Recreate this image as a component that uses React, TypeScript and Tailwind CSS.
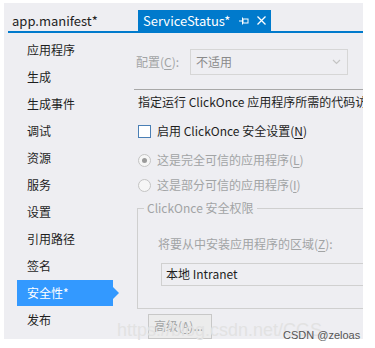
import React from "react";

const navItems = [
  "应用程序",
  "生成",
  "生成事件",
  "调试",
  "资源",
  "服务",
  "设置",
  "引用路径",
  "签名",
  "安全性*",
  "发布",
];

function U({ children }: { children: React.ReactNode }) {
  return <span className="underline underline-offset-2">{children}</span>;
}

function Chevron() {
  return (
    <svg width="9" height="6" viewBox="0 0 9 6" className="shrink-0">
      <path d="M1 1 L4.5 4.5 L8 1" fill="none" stroke="#c4c4c4" strokeWidth="1.2" />
    </svg>
  );
}

export default function App() {
  return (
    <div className="w-[375px] h-[348px] bg-white overflow-hidden relative font-['Noto_Sans_CJK_SC','Noto_Sans',sans-serif] text-[12px] text-[#1e1e1e]">
      <div className="ml-[4px] mt-[3px] w-[359px] h-[336px] bg-[#eeeef2] overflow-hidden flex flex-col">
        {/* tab strip */}
        <div className="ml-[4px] h-[28px] flex items-end">
          <div className="w-[130px] h-[21px] flex items-center pl-[4px] text-[13px] text-[#1e1e1e]">
            app.manifest*
          </div>
          <div className="w-[133px] h-[21px] bg-[#007acc] flex items-center pl-[5px] text-white text-[13px]">
            <span>ServiceStatus*</span>
            <svg width="10" height="8" viewBox="0 0 10 8" className="ml-[9px]">
              <path d="M0 4 H3.5 M3.5 0.5 V7.5" stroke="white" strokeWidth="1" fill="none" />
              <rect x="4" y="2" width="5" height="4" fill="none" stroke="white" strokeWidth="1" />
            </svg>
            <svg width="9" height="9" viewBox="0 0 9 9" className="ml-[8px]">
              <path d="M0.5 0.5 L8.5 8.5 M8.5 0.5 L0.5 8.5" stroke="white" strokeWidth="1.3" />
            </svg>
          </div>
        </div>
        <div className="ml-[4px] h-[2px] bg-[#007acc]" />

        <div className="flex flex-1 min-h-0">
          {/* nav */}
          <div className="w-[130px] shrink-0 pt-[3px] flex flex-col">
            {navItems.map((t) => {
              const sel = t === "安全性*";
              return (
                <div key={t} className="relative h-[27px] flex items-center">
                  <div
                    className={
                      sel
                        ? "ml-[13px] w-[96px] h-[26px] bg-[#3399ff] text-white flex items-center pl-[10px] relative"
                        : "ml-[13px] w-[96px] h-[26px] flex items-center pl-[10px]"
                    }
                  >
                    {t}
                    {sel && (
                      <div className="absolute right-[-6px] top-[7px] w-0 h-0 border-y-[6px] border-y-transparent border-l-[6px] border-l-[#3399ff]" />
                    )}
                  </div>
                </div>
              );
            })}
          </div>

          {/* content */}
          <div className="flex-1 min-w-0 flex flex-col">
            <div className="mt-[16px] h-[26px] flex items-center">
              <span className="pl-[2px] w-[56px] text-[#a2a4a5]">
                配置(<U>C</U>):
              </span>
              <div className="w-[158px] h-[26px] border border-[#d6d6d6] flex items-center justify-between pl-[5px] pr-[6px] text-[#8a8a8a]">
                <span>不适用</span>
                <Chevron />
              </div>
            </div>
            <div className="mt-[14px] h-px bg-[#a8a8a8]" />
            <div className="h-[26px] flex items-center pl-[4px] whitespace-nowrap">
              指定运行 ClickOnce 应用程序所需的代码访问安全权限
            </div>
            <div className="h-[34px] flex items-center pl-[4px]">
              <div className="w-[13px] h-[13px] border border-[#4a7fb5] bg-white" />
              <span className="ml-[6px]">
                启用 ClickOnce 安全设置(<U>N</U>)
              </span>
            </div>
            <div className="h-[26px] flex items-center pl-[4px] text-[#a2a4a5]">
              <div className="w-[13px] h-[13px] rounded-full border border-[#c4c4c4] bg-[#f6f6f6] flex items-center justify-center">
                <div className="w-[5px] h-[5px] rounded-full bg-[#9a9a9a]" />
              </div>
              <span className="ml-[6px]">
                这是完全可信的应用程序(<U>L</U>)
              </span>
            </div>
            <div className="h-[26px] flex items-center pl-[4px] text-[#a2a4a5]">
              <div className="w-[13px] h-[13px] rounded-full border border-[#c4c4c4] bg-[#f6f6f6]" />
              <span className="ml-[6px]">
                这是部分可信的应用程序(<U>I</U>)
              </span>
            </div>

            <div className="mt-[10px] ml-[3px] relative border-l border-t border-b border-[#cfcfcf] pt-[27px] pb-[22px] pl-[20px] text-[#a2a4a5]">
              <span className="absolute left-[6px] top-[-9px] bg-[#eeeef2] px-[3px] leading-[16px]">
                ClickOnce 安全权限
              </span>
              <div className="h-[16px] flex items-center whitespace-nowrap">
                将要从中安装应用程序的区域(<U>Z</U>):
              </div>
              <div className="mt-[11px] ml-[3px] h-[23px] border border-[#d0d0d0] flex items-center pl-[4px] text-[#1e1e1e] w-[260px]">
                本地 Intranet
              </div>
            </div>

            <div className="mt-[5px] ml-[14px] w-[64px] h-[26px] border border-[#c8c8c8] bg-[#ececec] flex items-center pl-[5px] text-[#a2a4a5]">
              高级(<U>A</U>)...
            </div>
          </div>
        </div>
      </div>

      {/* watermark */}
      <div className="absolute left-[117px] top-[319px] text-[18px] leading-[22px] text-[#e2e2e2] font-['Liberation_Sans',sans-serif] whitespace-nowrap">
        https://blog.csdn.net/CGS
      </div>
      <div className="absolute left-[283px] top-[328px] text-[11px] leading-[14px] text-[#555] font-['Liberation_Sans',sans-serif] whitespace-nowrap">
        CSDN @zeloas
      </div>
    </div>
  );
}
